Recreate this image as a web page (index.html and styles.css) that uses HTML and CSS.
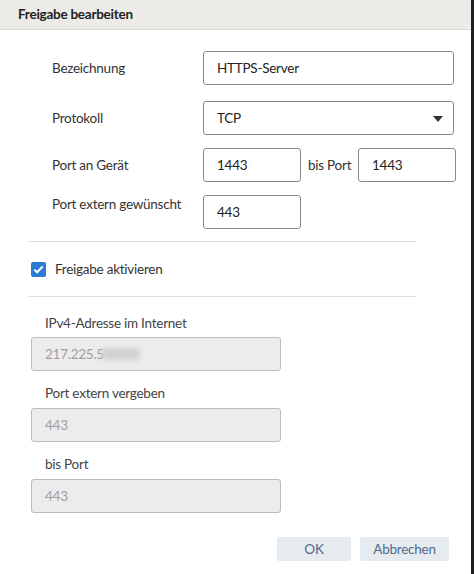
FILE: index.html
```html
<!DOCTYPE html>
<html lang="de">
<head>
<meta charset="utf-8">
<link rel="stylesheet" href="styles.css">
</head>
<body>
<div class="dialog">
  <div class="header">Freigabe bearbeiten</div>
  <div class="top">
    <div class="row">
      <div class="label">Bezeichnung</div>
      <div class="field wide">HTTPS-Server</div>
    </div>
    <div class="row r2">
      <div class="label">Protokoll</div>
      <div class="field wide select">TCP
        <svg class="arrow" width="10" height="6" viewBox="0 0 10 6"><path d="M0 0 L10 0 L5 6 Z" fill="#333"/></svg>
      </div>
    </div>
    <div class="row r3">
      <div class="label">Port an Gerät</div>
      <div class="field small">1443</div>
      <div class="bis">bis Port</div>
      <div class="field small">1443</div>
    </div>
    <div class="row r4">
      <div class="label">Port extern gewünscht</div>
      <div class="field small">443</div>
    </div>
  </div>
  <div class="divider d1"></div>
  <div class="check-row">
    <span class="checkbox">
      <svg width="15" height="15" viewBox="0 0 15 15"><path d="M3.3 7.6 L6.1 10.3 L11.8 4.4" fill="none" stroke="#fff" stroke-width="2"/></svg>
    </span>
    <span class="check-label">Freigabe aktivieren</span>
  </div>
  <div class="divider d2"></div>
  <div class="lower">
    <div class="dlabel first">IPv4-Adresse im Internet</div>
    <div class="dfield">217.225.5<span class="blur"></span></div>
    <div class="dlabel">Port extern vergeben</div>
    <div class="dfield">443</div>
    <div class="dlabel">bis Port</div>
    <div class="dfield">443</div>
  </div>
  <div class="buttons">
    <button class="btn ok">OK</button>
    <button class="btn cancel">Abbrechen</button>
  </div>
</div>
</body>
</html>
```
FILE: styles.css
```css
html, body {
  margin: 0;
  padding: 0;
  background: #fff;
}
body {
  font-family: Lato, "Open Sans", sans-serif;
  color: #333;
  font-size: 13.5px;
  letter-spacing: -0.25px;
}
.dialog {
  width: 471px;
  height: 574px;
  border-right: 3px solid #1f1f1f;
  display: flex;
  flex-direction: column;
}
.header {
  height: 29px;
  background: #ecebe8;
  border-bottom: 1px solid #dcdcd8;
  padding-left: 18px;
  font-weight: bold;
  font-size: 13.5px;
  line-height: 29px;
  color: #222;
}
.top {
  padding-left: 52px;
  padding-top: 21px;
}
.row {
  display: flex;
  align-items: center;
}
.r2 { margin-top: 16px; }
.r3 { margin-top: 13px; }
.r4 { margin-top: 13px; align-items: flex-start; }
.r4 .label { padding-top: 1px; }
.label {
  width: 151px;
  flex: none;
}
.field {
  box-sizing: border-box;
  height: 34px;
  border: 1px solid #8a8a8a;
  border-radius: 3px;
  padding-left: 13px;
  line-height: 32px;
  color: #222;
  background: #fff;
}
.wide { width: 251px; }
.select { position: relative; }
.arrow {
  position: absolute;
  right: 10px;
  top: 14px;
}
.small { width: 98px; }
.bis {
  width: 57px;
  padding-left: 7px;
  box-sizing: border-box;
}
.divider {
  height: 1px;
  background: #dedede;
  margin-left: 28px;
  width: 388px;
}
.d1 { margin-top: 12px; }
.check-row {
  display: flex;
  align-items: center;
  padding-left: 31px;
  height: 54px;
}
.checkbox {
  width: 15px;
  height: 15px;
  border-radius: 2px;
  background: #2b7bd4;
  display: flex;
}
.check-label {
  margin-left: 9px;
}
.lower {
  padding-left: 31px;
  display: flex;
  flex-direction: column;
}
.dlabel {
  padding-left: 14px;
  height: 37px;
  line-height: 44px;
  color: #444;
}
.dlabel.first {
  height: 40px;
  line-height: 52px;
}
.dfield {
  box-sizing: border-box;
  width: 250px;
  height: 34px;
  background: #ececec;
  border: 1px solid #bdbdbd;
  border-radius: 3px;
  padding-left: 13px;
  line-height: 32px;
  color: #a0a0a0;
  display: flex;
  align-items: center;
}
.blur {
  display: inline-block;
  width: 38px;
  height: 12px;
  background: #d2d2d2;
  filter: blur(2px);
  margin-left: -2px;
}
.buttons {
  display: flex;
  justify-content: flex-end;
  gap: 9px;
  margin-top: auto;
  padding-right: 22px;
  padding-bottom: 13px;
}
.btn {
  height: 24px;
  border: none;
  border-radius: 2px;
  background: #e6ebf0;
  color: #4f6a8c;
  font-family: Lato, "Open Sans", sans-serif;
  font-size: 13.5px;
  letter-spacing: -0.25px;
  padding: 0;
}
.ok { width: 74px; }
.cancel { width: 89px; }
```
